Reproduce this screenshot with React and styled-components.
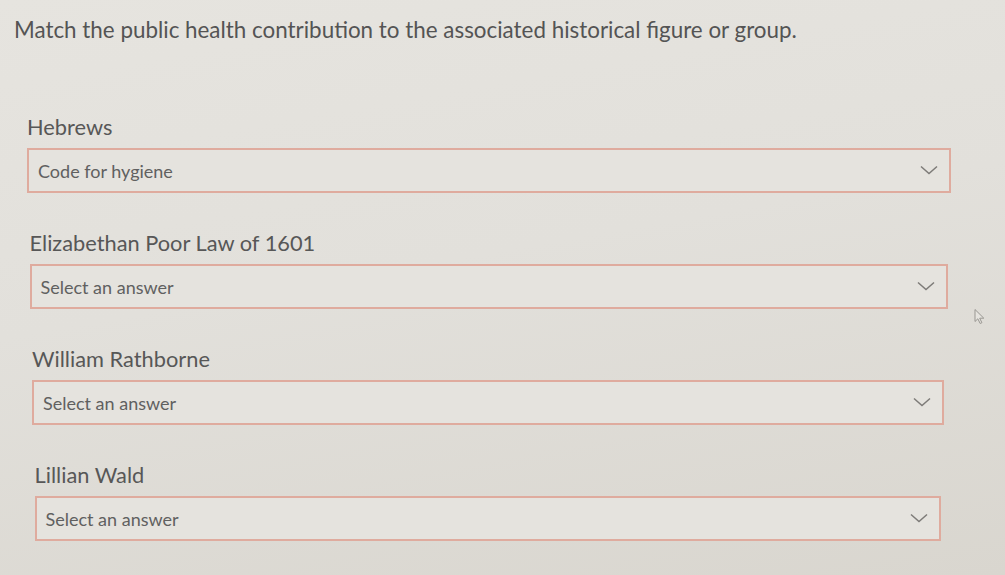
import React from 'react'
import styled, { createGlobalStyle } from 'styled-components'

const items = [
  { label: 'Hebrews', value: 'Code for hygiene' },
  { label: 'Elizabethan Poor Law of 1601', value: null },
  { label: 'William Rathborne', value: null },
  { label: 'Lillian Wald', value: null },
]

const Chevron = () => (
  <svg width="20" height="11" viewBox="0 0 20 11">
    <path d="M2 1.5 L10 8.5 L18 1.5" fill="none" stroke="#7d7b78" strokeWidth="1.5" />
  </svg>
)

const Cursor = () => (
  <svg width="13" height="17" viewBox="0 0 13 17">
    <path d="M2 1.5 L2 13.5 L4.8 10.8 L7.2 15.5 L8.9 14.7 L6.7 10.2 L10.8 10.2 Z" fill="#e6e4df" stroke="#999792" strokeWidth="1" strokeLinejoin="round" />
  </svg>
)

const App = () => {
  return (
    <Page>
      <GlobalStyle />
      <Title>Match the public health contribution to the associated historical figure or group.</Title>
      <List>
        {items.map((item, i) => (
          <Block key={item.label} $step={i}>
            <Label>{item.label}</Label>
            <Select $step={i}>
              <Value>{item.value || 'Select an answer'}</Value>
              <Chevron />
            </Select>
          </Block>
        ))}
      </List>
      <Pointer>
        <Cursor />
      </Pointer>
    </Page>
  )
}

const GlobalStyle = createGlobalStyle`
  body {
    margin: 0;
    font-family: Lato, "Open Sans", sans-serif;
    background: #e2e0db;
  }
`

const Page = styled.div`
  position: relative;
  width: 1005px;
  height: 575px;
  box-sizing: border-box;
  padding: 16px 0 0 14px;
  overflow: hidden;
  background: linear-gradient(170deg, #e6e4df 0%, #e2e0db 45%, #d9d6cf 100%);
`

const Title = styled.h1`
  margin: 0;
  font-size: 22.4px;
  line-height: 28px;
  font-weight: 400;
  color: #545454;
`

const List = styled.div`
  margin-top: 69px;
  display: flex;
  flex-direction: column;
`

const Block = styled.div`
  display: flex;
  flex-direction: column;
  margin-left: ${p => 13 + p.$step * 2.5}px;
  margin-bottom: 36px;
`

const Label = styled.div`
  font-size: 21.8px;
  line-height: 28px;
  color: #575757;
  margin-bottom: 7px;
`

const Select = styled.div`
  box-sizing: border-box;
  width: ${p => 924 - p.$step * 6}px;
  height: 45px;
  display: flex;
  align-items: center;
  justify-content: space-between;
  padding: 0 10px 0 9px;
  border: 2px solid #dfab9e;
  background: #e5e3de;
`

const Value = styled.span`
  font-size: 18px;
  color: #606060;
`

const Pointer = styled.div`
  position: absolute;
  left: 973px;
  top: 308px;
`

export default App
